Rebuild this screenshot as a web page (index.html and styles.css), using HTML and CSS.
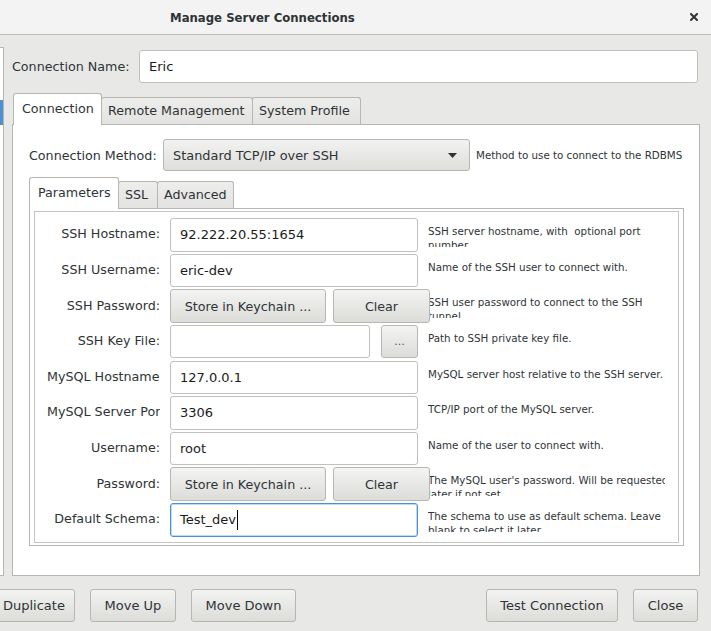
FILE: index.html
```html
<!DOCTYPE html>
<html>
<head>
<meta charset="utf-8">
<link rel="stylesheet" href="styles.css">
</head>
<body>
<header class="titlebar">
  <span class="title">Manage Server Connections</span>
  <svg class="close" width="8" height="8" viewBox="0 0 8 8"><path d="M1 1L7 7M7 1L1 7" stroke="#2e3436" stroke-width="2" stroke-linecap="square"/></svg>
</header>
<div class="main">
  <div class="sidebar"><div class="sel"></div></div>
  <div class="content">
    <div class="name-row">
      <span class="name-label">Connection Name:</span>
      <div class="entry name-entry">Eric</div>
    </div>
    <div class="tabs">
      <div class="tab active t-conn">Connection</div>
      <div class="tab t-remote">Remote Management</div>
      <div class="tab t-sys">System Profile</div>
    </div>
    <div class="panel">
      <div class="method-row">
        <span class="method-label">Connection Method:</span>
        <div class="combo"><span>Standard TCP/IP over SSH</span><svg width="9" height="5" viewBox="0 0 9 5"><path d="M0 0H9L4.5 5Z" fill="#2e3436"/></svg></div>
        <span class="method-help">Method to use to connect to the RDBMS</span>
      </div>
      <div class="subtabs">
        <div class="tab active s-param">Parameters</div>
        <div class="tab s-ssl">SSL</div>
        <div class="tab s-adv">Advanced</div>
      </div>
      <div class="subpanel">
        <div class="frame">
          <div class="row">
            <span class="label">SSH Hostname:</span>
            <div class="entry">92.222.20.55:1654</div>
            <div class="help">SSH server hostname, with&nbsp; optional port<br>number</div>
          </div>
          <div class="row">
            <span class="label">SSH Username:</span>
            <div class="entry">eric-dev</div>
            <div class="help">Name of the SSH user to connect with.</div>
          </div>
          <div class="row">
            <span class="label">SSH Password:</span>
            <div class="btns"><div class="btn keychain">Store in Keychain ...</div><div class="btn clear">Clear</div></div>
            <div class="help">SSH user password to connect to the SSH<br>tunnel.</div>
          </div>
          <div class="row">
            <span class="label">SSH Key File:</span>
            <div class="keyfile"><div class="entry key-entry"></div><div class="btn dots">...</div></div>
            <div class="help">Path to SSH private key file.</div>
          </div>
          <div class="row">
            <span class="label">MySQL Hostname:</span>
            <div class="entry">127.0.0.1</div>
            <div class="help">MySQL server host relative to the SSH server.</div>
          </div>
          <div class="row">
            <span class="label">MySQL Server Port:</span>
            <div class="entry">3306</div>
            <div class="help">TCP/IP port of the MySQL server.</div>
          </div>
          <div class="row">
            <span class="label">Username:</span>
            <div class="entry">root</div>
            <div class="help">Name of the user to connect with.</div>
          </div>
          <div class="row">
            <span class="label">Password:</span>
            <div class="btns"><div class="btn keychain">Store in Keychain ...</div><div class="btn clear">Clear</div></div>
            <div class="help">The MySQL user's password. Will be requested<br>later if not set.</div>
          </div>
          <div class="row">
            <span class="label">Default Schema:</span>
            <div class="entry focus">Test_dev<span class="cursor"></span></div>
            <div class="help">The schema to use as default schema. Leave<br>blank to select it later.</div>
          </div>
        </div>
      </div>
    </div>
  </div>
</div>
<footer class="footer">
  <div class="btn b-dup">Duplicate</div>
  <div class="btn b-up">Move Up</div>
  <div class="btn b-down">Move Down</div>
  <div class="btn b-test">Test Connection</div>
  <div class="btn b-close">Close</div>
</footer>
</body>
</html>
```
FILE: styles.css
```css
* { box-sizing: border-box; }
html, body { margin: 0; padding: 0; }
body {
  width: 711px;
  height: 631px;
  overflow: hidden;
  background: #e8e8e7;
  font-family: "DejaVu Sans", sans-serif;
  font-size: 12.7px;
  color: #2e3436;
}
.titlebar {
  height: 35px;
  background: #f3f3f3;
  border-bottom: 1px solid #bdbdba;
  display: flex;
  align-items: center;
}
.title {
  margin-left: 170px;
  font-family: "DejaVu Sans Condensed", "DejaVu Sans", sans-serif;
  font-weight: bold;
  font-size: 13px;
  color: #2e3436;
}
.close { margin-left: auto; margin-right: 13px; flex: none; }

.main { display: flex; height: 541px; }
.sidebar {
  flex: none;
  width: 4px;
  margin-top: 12px;
  height: 529px;
  background: #fff;
  border-top: 1px solid #b6b6b3;
  border-right: 1px solid #b6b6b3;
  border-bottom: 1px solid #b6b6b3;
}
.sel { margin-top: 52px; height: 25px; background: #4a90d9; }
.content { flex: none; margin-left: 8px; width: 688px; padding-top: 15px; }

.name-row { display: flex; align-items: center; height: 33px; }
.name-label { width: 127px; flex: none; white-space: nowrap; }
.entry {
  flex: none;
  height: 33.5px;
  background: #fff;
  border: 1px solid #c0c0bd;
  border-radius: 3px;
  padding-left: 9px;
  display: flex;
  align-items: center;
  color: #1a1a1a;
  font-size: 13px;
  white-space: nowrap;
}
.name-entry { width: 559px; height: 33px; }

.tabs, .subtabs {
  display: flex;
  align-items: flex-end;
  height: 32px;
  margin-bottom: -1px;
  position: relative;
  z-index: 1;
}
.tabs { margin-top: 10px; padding-left: 1px; }
.tab {
  flex: none;
  height: 27px;
  margin-bottom: 1px;
  padding-bottom: 2px;
  border: 1px solid #b6b6b3;
  border-bottom: none;
  border-radius: 3px 3px 0 0;
  background: linear-gradient(#ededec, #e3e3e1);
  display: flex;
  align-items: center;
  white-space: nowrap;
}
.tab + .tab { margin-left: -1px; }
.tab.active { height: 32px; margin-bottom: 0; padding-bottom: 3px; background: #fff; }
.t-conn { width: 89px; padding-left: 8px; }
.t-remote { width: 152px; padding-left: 6px; }
.t-sys { width: 109px; padding-left: 6px; }
.s-param { width: 90px; padding-left: 8px; }
.s-ssl { width: 40px; padding-left: 6px; }
.s-adv { width: 77px; padding-left: 6px; }

.panel {
  height: 452px;
  background: #fff;
  border: 1px solid #b6b6b3;
  padding: 14px 15px 0 16px;
}
.method-row { display: flex; align-items: center; height: 32px; }
.method-label { width: 134px; flex: none; white-space: nowrap; }
.combo {
  flex: none;
  width: 307px;
  height: 32px;
  border: 1px solid #b6b6b3;
  border-radius: 3px;
  background: linear-gradient(#f2f2f1, #dededb);
  display: flex;
  align-items: center;
  justify-content: space-between;
  padding: 0 12px 0 9px;
  font-size: 12.9px;
  white-space: nowrap;
}
.method-help { flex: none; margin-left: 6px; font-size: 10.3px; white-space: nowrap; }

.subtabs { margin-top: 6px; }
.subpanel {
  width: 655px;
  height: 338px;
  border: 1px solid #b6b6b3;
  padding: 2px 4px;
  background: #fff;
}
.frame {
  height: 332px;
  border: 1px solid #c4c4c1;
  padding: 6px 0 0 12px;
  display: grid;
  grid-template-columns: 113px 248px 237px;
  grid-auto-rows: 33.5px;
  column-gap: 10px;
  row-gap: 2.125px;
  align-content: start;
}
.row { display: contents; }
.label {
  align-self: center;
  text-align: right;
  white-space: nowrap;
  overflow: hidden;
  padding-bottom: 2px;
}
.help {
  font-size: 10.3px;
  line-height: 14px;
  padding-top: 6px;
  height: 29px;
  overflow: hidden;
  white-space: nowrap;
  color: #2e3436;
}
.btns { display: flex; gap: 7px; position: relative; z-index: 1; }
.btn {
  flex: none;
  height: 33.5px;
  border: 1px solid #b6b6b3;
  border-radius: 3px;
  background: linear-gradient(#f3f3f2, #dcdcd9);
  display: flex;
  align-items: center;
  justify-content: center;
  white-space: nowrap;
  color: #2e3436;
}
.keychain { width: 156px; }
.clear { width: 97px; }
.keyfile { display: flex; gap: 11px; }
.key-entry { width: 200px; }
.dots { width: 37px; font-size: 11px; color: #555; }
.focus {
  border-color: #4a90d9;
  box-shadow: inset 0 0 0 1px rgba(74,144,217,0.35);
}
.cursor { width: 1px; height: 20px; background: #000; margin-left: 1px; }

.footer {
  display: flex;
  padding-top: 13px;
  gap: 15px;
}
.footer .btn { height: 33px; font-size: 13px; }
.b-dup { width: 88px; margin-left: -13px; justify-content: flex-start; padding-left: 15px; }
.b-up { width: 86px; }
.b-down { width: 105px; }
.b-test { width: 132px; margin-left: auto; }
.b-close { width: 65px; margin-right: 13px; }
```
